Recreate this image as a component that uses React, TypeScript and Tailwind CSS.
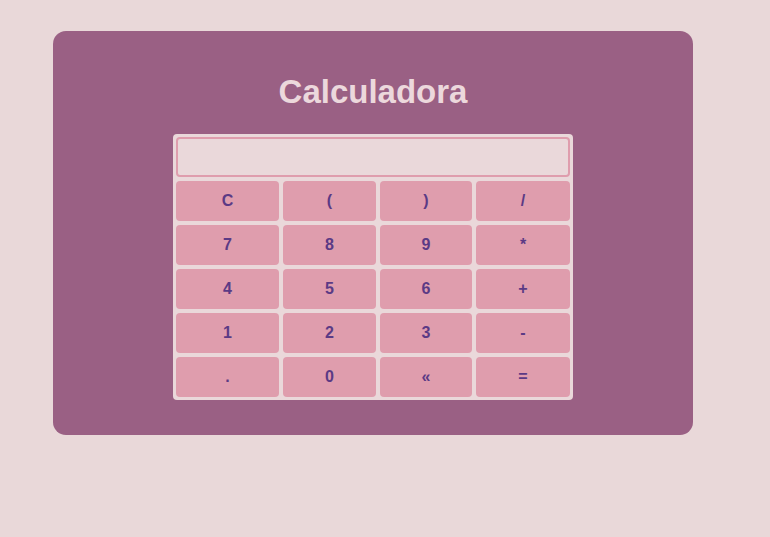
import { ReactNode, useState } from 'react'

const keys = ['C', '(', ')', '/', '7', '8', '9', '*', '4', '5', '6', '+', '1', '2', '3', '-', '.', '0', '«', '=']

export default function App(): ReactNode {
  const [display, setDisplay] = useState('')

  const press = (k: string): void => {
    if (k === 'C') return setDisplay('')
    if (k === '«') return setDisplay((d) => d.slice(0, -1))
    if (k === '=') {
      try {
        // eslint-disable-next-line no-new-func
        setDisplay(String(Function(`return (${display})`)()))
      } catch {
        setDisplay('Error')
      }
      return
    }
    setDisplay((d) => d + k)
  }

  return (
    <div className="min-h-[537px] bg-[#e9d8d9] pt-[31px] pl-[53px] font-['Liberation_Sans',Arial,sans-serif]">
      <div className="flex h-[404px] w-[640px] flex-col items-center rounded-[13px] bg-[#9a6084] pt-[42px]">
        <h1 className="mb-[23px] text-[33px] font-bold leading-[38px] text-[#ecd8dc]">Calculadora</h1>

        {/* Calculator body */}
        <div className="w-[400px] rounded-[4px] bg-[#ead8da] p-[3px]">
          <input
            value={display}
            readOnly
            className="mb-1 block h-[40px] w-[394px] rounded-[4px] border-2 border-[#df9dad] bg-[#ead8da] px-2 text-right text-xl text-[#5b3a85] outline-none"
          />
          <div className="grid grid-cols-[103px_93px_92px_94px] gap-1">
            {keys.map((k) => (
              <button
                key={k}
                onClick={() => press(k)}
                className="h-[40px] rounded-[4px] bg-[#df9dad] text-[16px] font-bold text-[#5b3a85]"
              >
                {k}
              </button>
            ))}
          </div>
        </div>
      </div>
    </div>
  )
}
